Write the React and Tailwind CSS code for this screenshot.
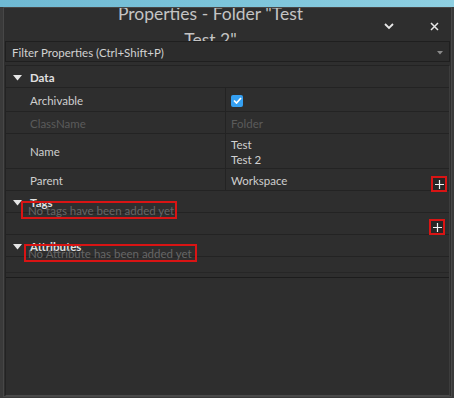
import React from "react";

const Caret = () => (
  <svg width="9" height="6" viewBox="0 0 9 6" className="shrink-0">
    <path d="M0 0 H9 L4.5 5.5 Z" fill="#e6e6e6" />
  </svg>
);

const Plus = () => (
  <svg width="9" height="9" viewBox="0 0 9 9">
    <path d="M4.5 0 V9 M0 4.5 H9" stroke="#f2f2f2" strokeWidth="1.2" />
  </svg>
);

const Header = ({ title, children }) => (
  <div className="relative h-[22px] flex items-center border-b border-[#232323]">
    <div className="w-[24px] pl-[7px] pt-[2px] flex items-center">
      <Caret />
    </div>
    <span className="pt-[2px] font-bold text-[11.5px] text-[#e0e0e0]">{title}</span>
    {children}
  </div>
);

const Row = ({ name, h = "h-[22px]", dim, children }) => (
  <div className={`relative flex border-b border-[#232323] ${h}`}>
    <div className="w-[220px] shrink-0 pl-[24px] pt-[2px] flex items-center border-r border-[#232323]">
      <span className={`text-[11.5px] ${dim ? "text-[#5b5b5b]" : "text-[#cfcfcf]"}`}>
        {name}
      </span>
    </div>
    <div className="flex-1 pl-[5px] pt-[2px] flex items-center">{children}</div>
  </div>
);

const AddBtn = ({ className }) => (
  <div
    className={`absolute flex items-center justify-center w-[16px] h-[16px] border-2 border-[#d91414] bg-[#262626] ${className}`}
  >
    <Plus />
  </div>
);

export default function App() {
  return (
    <div className="w-[454px] h-[398px] flex flex-col bg-[#3a3a3a] overflow-hidden font-['Lato',sans-serif]">
      <div className="h-[7px] shrink-0 bg-gradient-to-r from-[#6fb9d3] via-[#7cc4da] to-[#8fd0e2]" />
      <div className="flex-1 ml-[3px] mr-[2px] mb-[1px] flex flex-col bg-[#2e2e2e] border border-[#474747]">
        {/* title bar */}
        <div className="relative h-[33px] shrink-0 overflow-hidden">
          <div className="-mt-[7px] pr-[34px] text-center text-[17.5px] leading-[26px] text-[#c4c4c4]">
            Properties - Folder "Test
            <br />
            Test 2"
          </div>
          <div className="absolute right-[12px] top-[14px] flex items-center gap-[36px]">
            <svg width="10" height="7" viewBox="0 0 10 7">
              <path d="M1 1 L5 5 L9 1" stroke="#e8e8e8" strokeWidth="1.8" fill="none" />
            </svg>
            <svg width="9" height="9" viewBox="0 0 9 9">
              <path d="M1 1 L8 8 M8 1 L1 8" stroke="#e8e8e8" strokeWidth="1.5" />
            </svg>
          </div>
        </div>

        {/* filter */}
        <div className="mx-[1px] h-[21px] shrink-0 flex items-center justify-between border border-[#1f1f1f] bg-[#2c2c2c] pl-[6px] pr-[6px] pt-[2px]">
          <span className="text-[11.5px] text-[#d2d2d2]">Filter Properties (Ctrl+Shift+P)</span>
          <svg width="6" height="4" viewBox="0 0 6 4">
            <path d="M0 0 H6 L3 3.5 Z" fill="#8a8a8a" />
          </svg>
        </div>

        {/* properties */}
        <div className="mx-[1px] mt-[3px] flex-1 flex flex-col border border-[#232323] border-b-[#4a4a4a] border-r-[#3c3c3c]">
          <Header title="Data" />
          <Row name="Archivable" h="h-[24px]">
            <div className="w-[12px] h-[12px] rounded-[2px] bg-[#35a0f2] flex items-center justify-center">
              <svg width="9" height="7" viewBox="0 0 9 7">
                <path d="M1 3.5 L3.5 6 L8 1" stroke="#ffffff" strokeWidth="1.7" fill="none" />
              </svg>
            </div>
          </Row>
          <Row name="ClassName" dim>
            <span className="text-[11.5px] text-[#5b5b5b]">Folder</span>
          </Row>
          <Row name="Name" h="h-[35px]">
            <div className="text-[11.5px] leading-[15px] text-[#d2d2d2]">
              Test
              <br />
              Test 2
            </div>
          </Row>
          <Row name="Parent">
            <span className="text-[11.5px] text-[#cfcfcf]">Workspace</span>
            <AddBtn className="right-[2px] top-[7px]" />
          </Row>
          <Header title="Tags">
            <div className="absolute left-[15px] top-[10px] w-[156px] h-[18px] border-2 border-[#d91414] flex items-center pl-[5px] pt-[1px]">
              <span className="text-[11.5px] text-[#666666] whitespace-nowrap">No tags have been added yet</span>
            </div>
          </Header>
          <div className="relative h-[22px] border-b border-[#232323]">
            <AddBtn className="right-[4px] top-[6px]" />
          </div>
          <Header title="Attributes">
            <div className="absolute left-[18px] top-[9px] w-[173px] h-[18px] border-2 border-[#d91414] flex items-center pl-[2px] pt-[1px]">
              <span className="text-[11.5px] text-[#666666] whitespace-nowrap">No Attribute has been added yet</span>
            </div>
          </Header>
          <div className="h-[16px] border-b border-[#262626]" />
          <div className="h-[5px] border-b border-[#1c1c1c]" />
          <div className="flex-1" />
        </div>
      </div>
    </div>
  );
}
